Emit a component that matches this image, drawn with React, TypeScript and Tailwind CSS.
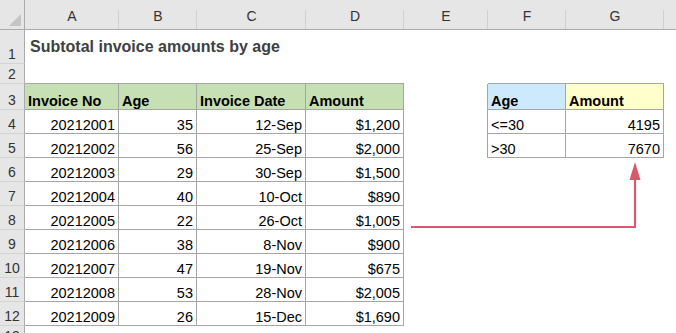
import React from 'react'

const cols = ['A', 'B', 'C', 'D', 'E', 'F', 'G', '']

const rows = [
  ['20212001', '35', '12-Sep', '$1,200'],
  ['20212002', '56', '25-Sep', '$2,000'],
  ['20212003', '29', '30-Sep', '$1,500'],
  ['20212004', '40', '10-Oct', '$890'],
  ['20212005', '22', '26-Oct', '$1,005'],
  ['20212006', '38', '8-Nov', '$900'],
  ['20212007', '47', '19-Nov', '$675'],
  ['20212008', '53', '28-Nov', '$2,005'],
  ['20212009', '26', '15-Dec', '$1,690'],
]

const summary = [
  ['<=30', '4195'],
  ['>30', '7670'],
]

// row heights include the 1px gridline at the bottom
const rowHeights = [34, 20, 26, 24, 24, 24, 24, 24, 24, 24, 24, 24]

function RowHead({ n, h }: { n: number; h: number }) {
  return (
    <div
      className="flex items-end justify-center bg-[#e6e6e6] border-r border-b border-r-[#ababab] border-b-[#d4d4d4] text-[14px] leading-none text-[#333] pb-[2px]"
      style={{ height: h }}
    >
      {n}
    </div>
  )
}

function Cell({
  children,
  className = '',
  right = false,
  bold = false,
}: {
  children?: React.ReactNode
  className?: string
  right?: boolean
  bold?: boolean
}) {
  return (
    <div
      className={
        'flex items-end px-[3px] pb-[1px] text-[14.5px] leading-none text-black whitespace-nowrap overflow-visible ' +
        (right ? 'justify-end ' : 'justify-start ') +
        (bold ? 'font-bold ' : '') +
        className
      }
    >
      {children}
    </div>
  )
}

export default function App() {
  return (
    <div className="relative w-[676px] h-[333px] overflow-hidden bg-white font-['Liberation_Sans',Arial,sans-serif]">
      <div className="grid grid-cols-[25px_94px_78px_109px_98px_84px_78px_98px_1fr] grid-rows-[30px_34px_20px_26px_repeat(9,24px)_1fr] h-[333px]">
        {/* column headers */}
        <div className="relative bg-[#e6e6e6] border-r border-b border-[#ababab]">
          <div className="absolute left-[9px] top-[14px] w-0 h-0 border-l-[12px] border-l-transparent border-b-[12px] border-b-[#c4c4c4]" />
        </div>
        {cols.map((c, i) => (
          <div key={i} className="relative flex items-end justify-center bg-[#e6e6e6] border-b border-b-[#ababab] text-[14px] leading-none text-[#333] pb-[6px]">
            {c}
            {i < cols.length - 1 && <div className="absolute right-0 top-[10px] bottom-0 w-px bg-[#d0d0d0]" />}
          </div>
        ))}

        {/* row 1 */}
        <RowHead n={1} h={rowHeights[0]} />
        <div className="col-span-8 flex items-end pl-[5px] pb-[9px] text-[16px] leading-none font-bold text-[#404040] whitespace-nowrap">
          Subtotal invoice amounts by age
        </div>

        {/* row 2 */}
        <RowHead n={2} h={rowHeights[1]} />
        <div className="border-b border-[#a6a6a6]" />
        <div className="border-b border-[#a6a6a6]" />
        <div className="border-b border-[#a6a6a6]" />
        <div className="border-b border-[#a6a6a6]" />
        <div />
        <div className="border-b border-[#a6a6a6]" />
        <div className="border-b border-[#a6a6a6]" />
        <div />

        {/* row 3 */}
        <RowHead n={3} h={rowHeights[2]} />
        <Cell bold className="bg-[#c6e0b4] border-r border-b border-[#a6a6a6]">Invoice No</Cell>
        <Cell bold className="bg-[#c6e0b4] border-r border-b border-[#a6a6a6]">Age</Cell>
        <Cell bold className="bg-[#c6e0b4] border-r border-b border-[#a6a6a6]">Invoice Date</Cell>
        <Cell bold className="bg-[#c6e0b4] border-r border-b border-[#a6a6a6]">Amount</Cell>
        <div className="border-r border-[#a6a6a6]" />
        <Cell bold className="bg-[#cdeafc] border-r border-b border-[#a6a6a6]">Age</Cell>
        <Cell bold className="bg-[#ffffcc] border-r border-b border-[#a6a6a6]">Amount</Cell>
        <div />

        {/* rows 4-12 */}
        {rows.map((r, i) => (
          <React.Fragment key={r[0]}>
            <RowHead n={i + 4} h={24} />
            {r.map((v, j) => (
              <Cell key={j} right className="border-r border-b border-[#a6a6a6]">
                {v}
              </Cell>
            ))}
            {i < 2 ? (
              <>
                <div className="border-r border-[#a6a6a6]" />
                <Cell className="border-r border-b border-[#a6a6a6]">{summary[i][0]}</Cell>
                <Cell right className="border-r border-b border-[#a6a6a6]">{summary[i][1]}</Cell>
              </>
            ) : (
              <>
                <div />
                <div />
                <div />
              </>
            )}
            <div />
          </React.Fragment>
        ))}

        {/* row 13, only the top of it is in view */}
        <div className="flex items-start justify-center overflow-hidden bg-[#e6e6e6] border-r border-[#ababab] pt-[3px] text-[14px] leading-none text-[#333]">
          <span className="h-[24px] shrink-0">13</span>
        </div>
        <div className="col-span-8" />
      </div>

      {/* connector arrow */}
      <svg className="absolute left-0 top-0 pointer-events-none" width="676" height="333" viewBox="0 0 676 333">
        <polyline points="411,227 635,227 635,176" fill="none" stroke="#d9596b" strokeWidth="2.2" />
        <polygon points="635,162 629.5,180 640.5,180" fill="#d9596b" />
      </svg>
    </div>
  )
}
